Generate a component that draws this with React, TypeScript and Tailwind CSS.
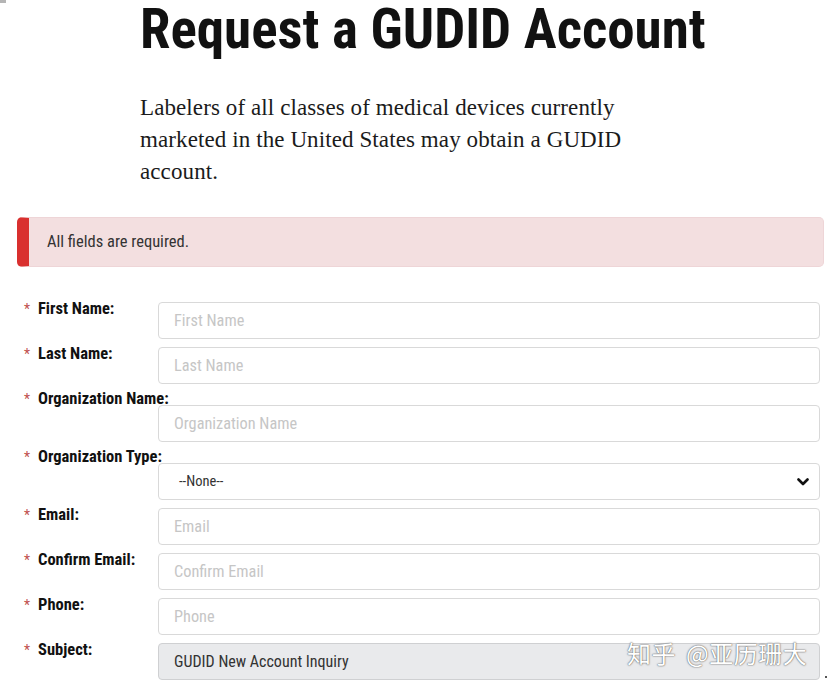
import React from "react";

const sans = "font-['Roboto_Condensed',Roboto,sans-serif]";

type Field = { label: string; ph?: string; kind?: "input" | "select" | "subject"; extra?: boolean };

const fields: Field[] = [
  { label: "First Name:", ph: "First Name" },
  { label: "Last Name:", ph: "Last Name" },
  { label: "Organization Name:", ph: "Organization Name", extra: true },
  { label: "Organization Type:", kind: "select", extra: true },
  { label: "Email:", ph: "Email" },
  { label: "Confirm Email:", ph: "Confirm Email" },
  { label: "Phone:", ph: "Phone" },
  { label: "Subject:", kind: "subject" },
];

function Control({ f }: { f: Field }) {
  const mt = f.extra ? "mt-[13px]" : "";
  if (f.kind === "select") {
    return (
      <div
        className={`${mt} flex-1 h-[37px] flex items-center justify-between rounded-[4px] border border-[#d9d9d9] bg-white pl-[20px] pr-[10px] text-[14.5px] text-[#333]`}
      >
        <span>--None--</span>
        <svg width="12" height="8" viewBox="0 0 12 8" className="mt-[1px]">
          <polyline points="1.5,1.5 6,6 10.5,1.5" fill="none" stroke="#111" strokeWidth="2.6" strokeLinecap="round" strokeLinejoin="round" />
        </svg>
      </div>
    );
  }
  if (f.kind === "subject") {
    return (
      <div className="flex-1 h-[37px] flex items-center rounded-[4px] border border-[#cfd0d2] bg-[#e9eaec] pl-[15px] text-[16px] text-[#333]">
        GUDID New Account Inquiry
      </div>
    );
  }
  return (
    <input
      readOnly
      placeholder={f.ph}
      className={`${mt} flex-1 min-w-0 h-[37px] rounded-[4px] border border-[#d9d9d9] bg-white px-[15px] text-[16.3px] text-[#333] outline-none placeholder:text-[#c6c6c6]`}
    />
  );
}

export default function App() {
  return (
    <div className="relative w-[827px] h-[685px] overflow-hidden bg-white">
      <div className="absolute left-0 top-0 w-[6px] h-[3px] bg-[#b5b5b5]" />
      <div className="pl-[140px]">
        <h1 className={`${sans} font-bold text-[55px] leading-[58px] text-[#111] whitespace-nowrap`}>
          Request a GUDID Account
        </h1>
        <p className="mt-[34px] w-[505px] font-['Liberation_Serif',serif] text-[23px] leading-[32px] tracking-[0.1px] text-[#1b1b1b]">
          Labelers of all classes of medical devices currently marketed in the United States may obtain a GUDID account.
        </p>
      </div>

      <div
        className={`${sans} mt-[29px] ml-[17px] mr-[3px] h-[50px] flex items-center rounded-[5px] border border-[#eed5d7] border-l-[12px] border-l-[#d9302f] bg-[#f3dfe0] pl-[18px] text-[16.5px] text-[#333]`}
      >
        All fields are required.
      </div>

      <div className={`${sans} mt-[35px] pl-[24px] pr-[7px] flex flex-col gap-[8px]`}>
        {fields.map((f) => (
          <div key={f.label} className="flex items-start">
            <div className="w-[134px] shrink-0 whitespace-nowrap leading-[13px] text-[#111]">
              <span className="inline-block w-[14px] text-[14px] text-[#c0504d]">*</span>
              <span className="text-[16.5px] font-bold">{f.label}</span>
            </div>
            <Control f={f} />
          </div>
        ))}
      </div>

      <div className="absolute left-[627px] top-[641px] flex items-center font-['Noto_Sans_CJK_SC',sans-serif] text-[24px] leading-[24px] tracking-[0.5px] text-white [text-shadow:0_0_1px_#555,0_0_2px_#777]">
        <span>知乎</span>
        <span className="ml-[10px]">@亚历珊大</span>
      </div>
      <div className="absolute left-[825px] top-[676px] w-[2px] h-[2px] bg-[#555]" />
    </div>
  );
}
